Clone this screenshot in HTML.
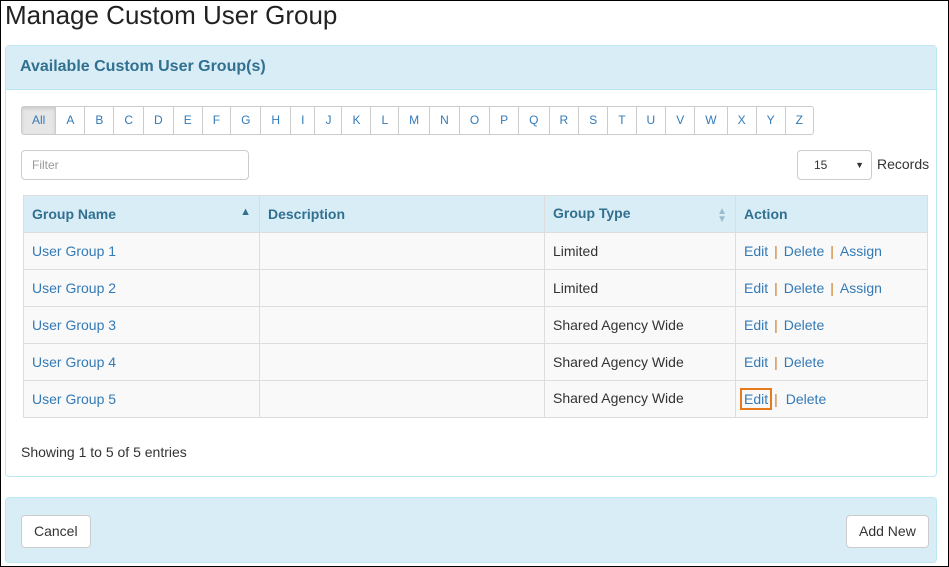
<!DOCTYPE html>
<html><head><style>
*{box-sizing:border-box;margin:0;padding:0}
body{width:949px;height:567px;font-family:"Liberation Sans",Arial,sans-serif;font-size:14px;color:#333;background:#fff;position:relative;overflow:hidden}
.frame{position:absolute;left:0;top:0;width:949px;height:567px;border:1px solid #000;z-index:5;pointer-events:none}
h1{position:absolute;left:5px;top:0px;font-weight:normal;font-size:26px;color:#222}
.panel{position:absolute;left:5px;width:932px;border:1px solid #bce8f1;border-radius:4px;background:#fff}
.ph{height:44px;background:#d9edf7;border-bottom:1px solid #bce8f1;color:#31708f;font-weight:bold;font-size:16px;padding:12px 14px}
.alpha{position:absolute;left:15px;top:60px;display:flex;height:29px}
.alpha span{border:1px solid #ccc;margin-left:-1px;padding:0 10px;line-height:27px;font-size:12px;color:#337ab7}
.alpha span:first-child{background:#e6e6e6;color:#337ab7;margin-left:0;border-radius:3px 0 0 3px;box-shadow:inset 0 2px 3px rgba(0,0,0,.12)}
.alpha span:last-child{border-radius:0 3px 3px 0}
.inp{position:absolute;border:1px solid #ccc;border-radius:4px;height:30px;font-size:12px;line-height:28px;padding-left:10px}
table{position:absolute;left:17px;top:149px;width:905px;border-collapse:collapse}
td,th{border:1px solid #ddd;text-align:left;padding:0 8px}
th{background:#d9edf7;color:#31708f;height:37px}
td{background:#f9f9f9;height:37px}
a{color:#337ab7;text-decoration:none}
.sep{color:#c87a1e;margin:0 6px}
.btn{position:absolute;background:#fff;border:1px solid #ccc;border-radius:4px;height:33px;line-height:31px;padding:0 12px;color:#333}
</style></head><body>
<div class="frame"></div>
<h1>Manage Custom User Group</h1>
<div class="panel" style="top:45px;height:432px">
<div class="ph">Available Custom User Group(s)</div>
<div class="alpha"><span>All</span><span>A</span><span>B</span><span>C</span><span>D</span><span>E</span><span>F</span><span>G</span><span>H</span><span>I</span><span>J</span><span>K</span><span>L</span><span>M</span><span>N</span><span>O</span><span>P</span><span>Q</span><span>R</span><span>S</span><span>T</span><span>U</span><span>V</span><span>W</span><span>X</span><span>Y</span><span>Z</span></div>
<div class="inp" style="left:15px;top:104px;width:228px;color:#999">Filter</div>
<div class="inp" style="left:791px;top:104px;width:75px;padding-left:16px;color:#333">15<span style="position:absolute;right:7px;font-size:9px">▼</span></div>
<div style="position:absolute;left:871px;top:110px">Records</div>
<table>
<tr><th style="width:236px;height:36px">Group Name<span style="float:right;font-size:11px;color:#31708f">▲</span></th><th style="width:285px">Description</th><th style="width:191px">Group Type<span style="float:right;font-size:10px;color:#9bbccf;line-height:8px;margin-top:3px">▲<br>▼</span></th><th>Action</th></tr>
<tr><td><a>User Group 1</a></td><td></td><td>Limited</td><td><a>Edit</a><span class="sep">|</span><a>Delete</a><span class="sep">|</span><a>Assign</a></td></tr>
<tr><td><a>User Group 2</a></td><td></td><td>Limited</td><td><a>Edit</a><span class="sep">|</span><a>Delete</a><span class="sep">|</span><a>Assign</a></td></tr>
<tr><td><a>User Group 3</a></td><td></td><td>Shared Agency Wide</td><td><a>Edit</a><span class="sep">|</span><a>Delete</a></td></tr>
<tr><td style="height:36px"><a>User Group 4</a></td><td></td><td>Shared Agency Wide</td><td><a>Edit</a><span class="sep">|</span><a>Delete</a></td></tr>
<tr><td style="height:35px"><a>User Group 5</a></td><td></td><td style="padding-bottom:2px">Shared Agency Wide</td><td style="padding-left:4px"><a style="border:2px solid #e87a1e;padding:1px 2px">Edit</a><span class="sep" style="margin:0 8px 0 2px">|</span><a>Delete</a></td></tr>
</table>
<div style="position:absolute;left:15px;top:398px">Showing 1 to 5 of 5 entries</div>
</div>
<div class="panel" style="top:497px;height:66px;background:#d9edf7"></div>
<div class="btn" style="left:21px;top:515px">Cancel</div>
<div class="btn" style="left:846px;top:515px">Add New</div>
</body></html>
